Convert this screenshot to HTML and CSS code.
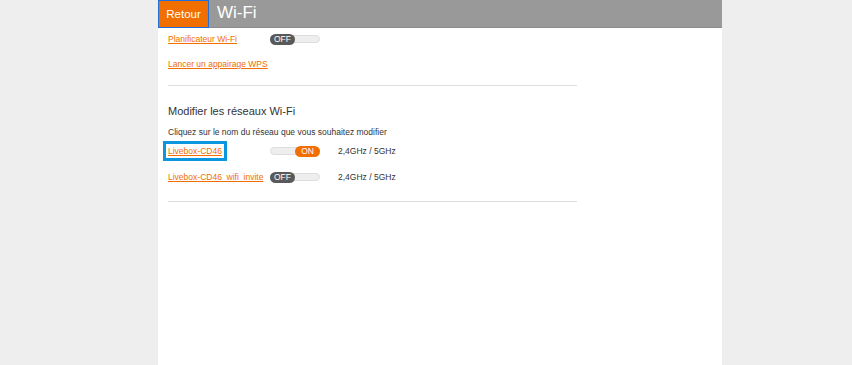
FILE: index.html
```html
<!DOCTYPE html>
<html lang="fr">
<head>
    <meta charset="UTF-8">
    <title>Wi-Fi</title>
    <link rel="stylesheet" href="styles.css">
</head>
<body>
    <div class="page">
        <div class="top-bar">
            <button class="btn-back">Retour</button>
            <h1>Wi-Fi</h1>
        </div>

        <div class="content">
            <div class="row row-first">
                <div class="label"><a href="#">Planificateur Wi-Fi</a></div>
                <div class="switch off"><span class="knob">OFF</span></div>
            </div>
            <div class="row row-wps">
                <div class="label"><a href="#">Lancer un appairage WPS</a></div>
            </div>

            <hr class="sep">

            <h2>Modifier les réseaux Wi-Fi</h2>
            <p class="hint">Cliquez sur le nom du réseau que vous souhaitez modifier</p>

            <div class="row net">
                <div class="label"><a href="#" class="focused">Livebox-CD46</a></div>
                <div class="switch on"><span class="knob">ON</span></div>
                <span class="band">2,4GHz / 5GHz</span>
            </div>
            <div class="row net">
                <div class="label"><a href="#">Livebox-CD46_wifi_invite</a></div>
                <div class="switch off"><span class="knob">OFF</span></div>
                <span class="band">2,4GHz / 5GHz</span>
            </div>

            <hr class="sep sep-bottom">
        </div>
    </div>
</body>
</html>
```

FILE: styles.css
```css
* {
    margin: 0;
    padding: 0;
    box-sizing: border-box;
}

body {
    font-family: "Liberation Sans", Arial, sans-serif;
    background: #eeeeee;
    height: 100vh;
    overflow: hidden;
}

.page {
    margin-left: 158px;
    width: 564px;
    height: 100vh;
    background: white;
}

.top-bar {
    height: 28px;
    background: #999999;
    border-bottom: 1px solid #8c8c8c;
    display: flex;
    align-items: stretch;
}

.btn-back {
    width: 51px;
    height: 28px;
    background: #f16e00;
    color: white;
    border: 1px solid #1f6fd6;
    font-family: inherit;
    font-size: 11.5px;
    cursor: pointer;
}

.top-bar h1 {
    margin-left: 8px;
    color: white;
    font-weight: normal;
    font-size: 17px;
    line-height: 25px;
}

.content {
    padding: 0 10px;
    width: 429px;
}

.row {
    display: flex;
    align-items: center;
    height: 14px;
    font-size: 8.5px;
}

.row-first {
    margin-top: 4px;
}

.row-wps {
    margin-top: 11px;
}

.label {
    width: 102px;
    white-space: nowrap;
}

.label a {
    color: #f16e00;
}

.label a.focused {
    outline: 3px solid #0b97e0;
    outline-offset: 2px;
}

.switch {
    width: 50px;
    height: 8px;
    border-radius: 5px;
    background: #eeeeee;
    border: 1px solid #dddddd;
    display: flex;
    align-items: center;
}

.switch.on {
    justify-content: flex-end;
}

.knob {
    width: 25px;
    height: 11px;
    border-radius: 6px;
    color: white;
    font-size: 8.5px;
    display: flex;
    align-items: center;
    justify-content: center;
}

.switch.off .knob {
    background: #595959;
    margin-left: -1px;
}

.switch.on .knob {
    background: #f16e00;
    margin-right: -1px;
}

.band {
    margin-left: 18px;
    color: #333;
}

.sep {
    border: none;
    border-top: 1px solid #dddddd;
    margin-top: 14px;
}

.sep-bottom {
    margin-top: 17px;
}

h2 {
    margin-top: 18px;
    font-size: 11px;
    font-weight: normal;
    color: #333;
    line-height: 14px;
}

.hint {
    margin-top: 7px;
    font-size: 8.5px;
    color: #333;
    line-height: 14px;
}

.row.net {
    margin-top: 5px;
}

.row.net + .row.net {
    margin-top: 12px;
}
```
